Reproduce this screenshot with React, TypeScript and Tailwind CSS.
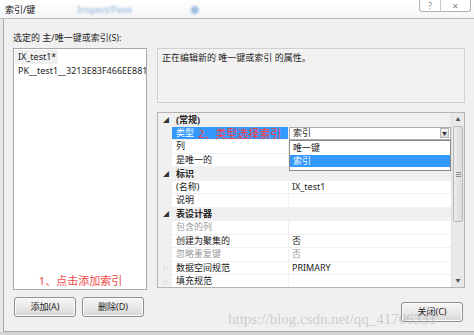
import React from "react";

type Row =
  | { kind: "cat"; label: string }
  | {
      kind: "prop";
      label: string;
      value?: string;
      dim?: boolean;
      expand?: boolean;
      selected?: boolean;
    };

const rows: Row[] = [
  { kind: "cat", label: "(常规)" },
  { kind: "prop", label: "类型", value: "索引", selected: true },
  { kind: "prop", label: "列" },
  { kind: "prop", label: "是唯一的" },
  { kind: "cat", label: "标识" },
  { kind: "prop", label: "(名称)", value: "IX_test1" },
  { kind: "prop", label: "说明" },
  { kind: "cat", label: "表设计器" },
  { kind: "prop", label: "包含的列", dim: true },
  { kind: "prop", label: "创建为聚集的", value: "否" },
  { kind: "prop", label: "忽略重复键", value: "否", dim: true },
  { kind: "prop", label: "数据空间规范", value: "PRIMARY", expand: true },
  { kind: "prop", label: "填充规范", expand: true },
];

function WinButton({ label, className }: { label: string; className?: string }) {
  return (
    <div
      className={
        "h-[20px] w-[62px] flex items-center justify-center rounded-[3px] border border-[#8e8f8f] bg-linear-to-b from-[#f6f6f6] via-[#e9e9e9] to-[#d6d6d6] text-[9px] leading-[12px] text-[#1e1e1e] shadow-[inset_0_0_0_1px_#fcfcfc] " +
        (className ?? "")
      }
    >
      {label}
    </div>
  );
}

function PropertyGrid() {
  return (
    <div className="h-[176px] w-[308px] border border-[#b4b4b4] bg-white flex">
      <div className="relative flex-1 overflow-hidden flex flex-col">
        {rows.map((r, i) =>
          r.kind === "cat" ? (
            <div key={i} className="h-[13.5px] shrink-0 flex items-center bg-[#f0f0f0]">
              <div className="w-[14px] flex justify-center pl-[2px]">
                <span className="text-[6px] leading-[6px] text-[#333]">◢</span>
              </div>
              <span className="pl-[4px] text-[9px] leading-[12px] font-bold text-[#222]">{r.label}</span>
            </div>
          ) : (
            <div key={i} className="h-[13.5px] shrink-0 flex">
              <div className="w-[14px] bg-[#f0f0f0] flex items-center justify-center pl-[2px]">
                {r.expand && <span className="text-[6px] leading-[6px] text-[#9a9a9a]">▷</span>}
              </div>
              <div
                className={
                  "w-[117px] flex items-center pl-[4px] border-b border-r border-[#f0f0f0] text-[9px] leading-[12px] " +
                  (r.selected ? "bg-[#3399ff] text-white" : r.dim ? "text-[#9a9a9a]" : "text-[#222]")
                }
              >
                {r.label}
              </div>
              {r.selected ? (
                <div className="flex-1 flex items-center border border-[#acacac] bg-white pl-[3px] pr-[1px]">
                  <span className="flex-1 text-[9px] leading-[12px] text-[#222]">{r.value}</span>
                  <div className="w-[9px] h-[10px] border border-[#b5b5b5] bg-linear-to-b from-[#f4f4f4] to-[#dedede] flex items-center justify-center">
                    <span className="text-[5px] leading-[5px] text-[#333]">▼</span>
                  </div>
                </div>
              ) : (
                <div
                  className={
                    "flex-1 flex items-center pl-[3px] border-b border-[#f0f0f0] text-[9px] leading-[12px] " +
                    (r.dim ? "text-[#9a9a9a]" : "text-[#222]")
                  }
                >
                  {r.value}
                </div>
              )}
            </div>
          )
        )}

        {/* annotation on the selected row */}
        <span className="absolute left-[40px] top-[13.5px] h-[13.5px] flex items-center text-[11px] leading-[13px] text-[#ff3b3b]">
          2、类型选择索引
        </span>

        {/* open dropdown list */}
        <div className="absolute left-[131px] top-[27px] w-[162px] h-[31px] border border-[#8a8a8a] bg-white flex flex-col pt-[1px]">
          <div className="h-[12.5px] flex items-center pl-[3px] text-[9px] leading-[12px] text-[#222]">唯一键</div>
          <div className="h-[12px] flex items-center pl-[3px] bg-[#3399ff] text-[9px] leading-[12px] text-white">索引</div>
        </div>
      </div>

      {/* scrollbar */}
      <div className="w-[13px] bg-[#e9e9e9] border-l border-[#e0e0e0] flex flex-col">
        <div className="h-[13px] flex items-center justify-center">
          <span className="text-[5px] leading-[5px] text-[#555]">▲</span>
        </div>
        <div className="h-[96px] mx-[1px] rounded-[2px] border border-[#b8b8b8] bg-linear-to-r from-[#ececec] to-[#dcdcdc] flex items-center justify-center">
          <div className="flex flex-col gap-[1px]">
            <div className="w-[5px] h-[1px] bg-[#8c8c8c]" />
            <div className="w-[5px] h-[1px] bg-[#8c8c8c]" />
            <div className="w-[5px] h-[1px] bg-[#8c8c8c]" />
          </div>
        </div>
        <div className="flex-1" />
        <div className="h-[13px] flex items-center justify-center">
          <span className="text-[5px] leading-[5px] text-[#555]">▼</span>
        </div>
      </div>
    </div>
  );
}

export default function App() {
  return (
    <div className="relative w-[474px] h-[335px] overflow-hidden bg-[#d8d8d8] flex flex-col font-['Noto_Sans','Noto_Sans_CJK_SC',sans-serif]">
      {/* title bar */}
      <div className="h-[19px] shrink-0 flex items-start bg-linear-to-b from-white to-[#f4f5f7] border-b border-[#bcbcbc]">
        <span className="pl-[5px] pt-[4px] text-[9px] leading-[12px] text-[#111]">索引/键</span>
        <span className="ml-[42px] pt-[4px] text-[9px] leading-[12px] text-[#8fb0dd] blur-[1.2px]">Inspect/Peek</span>
        <span className="ml-[58px] pt-[4px] text-[9px] leading-[12px] text-[#9fbde3] blur-[1px]">●</span>
        <div className="ml-auto mr-[3px] h-[12px] w-[52px] flex border-x border-b border-[#b0b0b0] rounded-b-[3px] bg-white">
          <div className="w-[21px] flex items-center justify-center border-r border-[#c8c8c8] text-[8px] leading-[8px] text-[#777]">?</div>
          <div className="flex-1 flex items-center justify-center text-[8px] leading-[8px] text-[#888]">✕</div>
        </div>
      </div>

      {/* body */}
      <div className="flex-1 pl-[3px] bg-[#e6e9ec] flex flex-col">
        <div className="flex-1 border-l border-b border-[#a8a8a8] bg-[#f0f0f0] px-[9px] pt-[13px] flex flex-col">
          <div className="h-[12px] mb-[4px] text-[9px] leading-[12px] text-[#1e1e1e]">选定的 主/唯一键或索引(S):</div>

          <div className="flex gap-[10px] h-[242px]">
            <div className="w-[134px] border border-[#a9a9a9] bg-white flex flex-col pt-[1px] pl-[1px] pb-[2px]">
              <div className="h-[13.7px] w-[43px] bg-[#f0f0f0] flex items-center pl-[3px] text-[9px] leading-[12px] text-[#1e1e1e]">
                IX_test1*
              </div>
              <div className="h-[13.7px] flex items-center pl-[3px] text-[9px] leading-[12px] text-[#1e1e1e] whitespace-nowrap">
                PK__test1__3213E83F466EE881
              </div>
              <div className="mt-auto text-center text-[11px] leading-[13px] text-[#f04848]">1、点击添加索引</div>
            </div>

            <div className="w-[308px] flex flex-col gap-[9px]">
              <div className="h-[55px] border border-[#d0d0d0] bg-[#f2f2f2] px-[4px] pt-[3px] text-[9px] leading-[12px] text-[#1e1e1e]">
                正在编辑新的 唯一键或索引 的属性。
              </div>
              <PropertyGrid />
            </div>
          </div>

          <div className="flex items-start mt-[7px]">
            <WinButton label="添加(A)" className="ml-[1px]" />
            <WinButton label="删除(D)" className="ml-[6px]" />
            <WinButton label="关闭(C)" className="ml-auto mr-[2px] mt-[5px] w-[60px]" />
          </div>
        </div>
      </div>
      <div className="h-[3px] shrink-0 bg-[#d4d4d4]" />

      {/* watermark */}
      <span className="absolute left-[228px] top-[310px] whitespace-nowrap font-['Liberation_Serif',serif] text-[15px] leading-[18px] text-[#b4b4b4]/60">
        https://blog.csdn.net/qq_41706331
      </span>
    </div>
  );
}
